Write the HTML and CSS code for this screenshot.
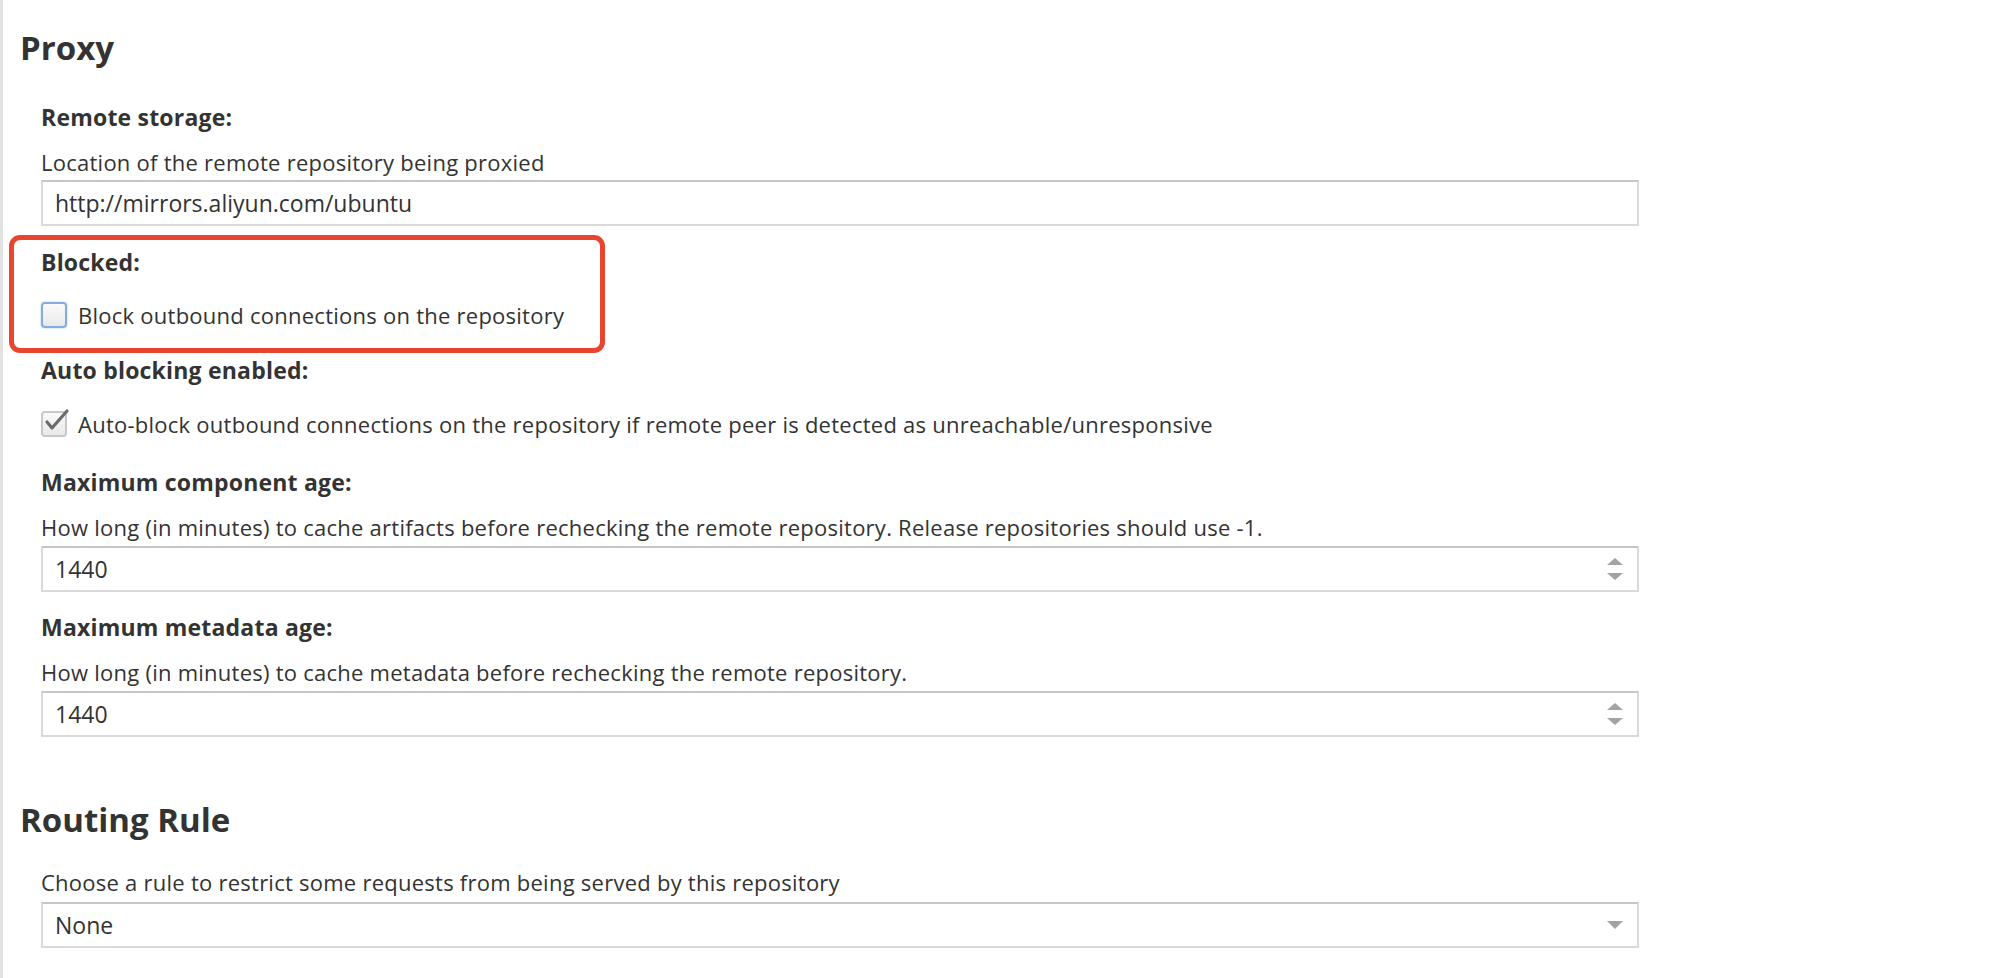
FILE: index.html
```html
<!DOCTYPE html>
<html lang="en">
<head>
    <meta charset="UTF-8">
    <title>Repository settings</title>
    <link rel="stylesheet" href="styles.css">
</head>
<body>
    <div class="page">
        <h2 class="section-title">Proxy</h2>
        <div class="fields">
            <!-- Remote storage -->
            <div class="field first">
                <div class="field-label">Remote storage:</div>
                <div class="field-help">Location of the remote repository being proxied</div>
                <div class="text-input">http://mirrors.aliyun.com/ubuntu</div>
            </div>

            <!-- Blocked (highlighted) -->
            <div class="highlight">
                <div class="field">
                    <div class="field-label">Blocked:</div>
                    <label class="check-row">
                        <span class="checkbox focused"></span>
                        <span>Block outbound connections on the repository</span>
                    </label>
                </div>
            </div>

            <!-- Auto blocking -->
            <div class="field after-highlight">
                <div class="field-label">Auto blocking enabled:</div>
                <label class="check-row">
                    <span class="checkbox checked">
                        <svg width="28" height="26" viewBox="0 0 28 26"><path d="M5 14 L10 20 L25 3" fill="none" stroke="#6b6b6b" stroke-width="3.2" stroke-linecap="round" stroke-linejoin="round"/></svg>
                    </span>
                    <span>Auto-block outbound connections on the repository if remote peer is detected as unreachable/unresponsive</span>
                </label>
            </div>

            <!-- Max component age -->
            <div class="field after-check">
                <div class="field-label">Maximum component age:</div>
                <div class="field-help">How long (in minutes) to cache artifacts before rechecking the remote repository. Release repositories should use -1.</div>
                <div class="text-input number">
                    <span>1440</span>
                    <svg class="spinner" width="18" height="24" viewBox="0 0 18 24"><path d="M9 1 L17 8 L1 8 Z M1 16 L17 16 L9 23 Z" fill="#a3a3a3"/></svg>
                </div>
            </div>

            <!-- Max metadata age -->
            <div class="field">
                <div class="field-label">Maximum metadata age:</div>
                <div class="field-help">How long (in minutes) to cache metadata before rechecking the remote repository.</div>
                <div class="text-input number">
                    <span>1440</span>
                    <svg class="spinner" width="18" height="24" viewBox="0 0 18 24"><path d="M9 1 L17 8 L1 8 Z M1 16 L17 16 L9 23 Z" fill="#a3a3a3"/></svg>
                </div>
            </div>
        </div>

        <h2 class="section-title routing">Routing Rule</h2>
        <div class="fields">
            <div class="field">
                <div class="field-help top">Choose a rule to restrict some requests from being served by this repository</div>
                <div class="text-input number">
                    <span>None</span>
                    <svg class="spinner" width="18" height="10" viewBox="0 0 18 10"><path d="M1 1 L17 1 L9 9 Z" fill="#a3a3a3"/></svg>
                </div>
            </div>
        </div>
    </div>
</body>
</html>
```

FILE: styles.css
```css
body {
    margin: 0;
    font-family: 'Open Sans', 'Liberation Sans', sans-serif;
    color: #333;
    background: #fff;
}

.page {
    min-height: 978px;
    box-sizing: border-box;
    border-left: 3px solid #e2e2e2;
    padding: 28px 0 0 17px;
}

.section-title {
    margin: 0;
    font-size: 33px;
    line-height: 40px;
    font-weight: 700;
    color: #333;
}

.section-title.routing {
    margin-top: 63px;
}

.fields {
    padding-left: 21px;
    width: 1598px;
}

.field {
    margin-top: 22px;
}

.field.first {
    margin-top: 36px;
}

.field.after-highlight {
    margin-top: 4px;
}

.field.after-check {
    margin-top: 32px;
}

.field-label {
    font-size: 23px;
    letter-spacing: 0.2px;
    line-height: 26px;
    font-weight: 700;
}

.field-help {
    margin-top: 20px;
    font-size: 22px;
    letter-spacing: 0.25px;
    line-height: 24px;
}

.field-help.top {
    margin-top: 30px;
}

.text-input {
    margin-top: 6px;
    height: 46px;
    box-sizing: border-box;
    border: 2px solid #d9d9d9;
    border-top-color: #c6c6c6;
    padding: 0 13px 0 12px;
    font-size: 23px;
    line-height: 42px;
    display: flex;
    align-items: center;
    justify-content: space-between;
}

.text-input.number {
    margin-top: 7px;
}

.fields:last-child .text-input {
    margin-top: 8px;
}

/* red annotation box round the Blocked field */
.highlight {
    margin: 9px 0 0 -32px;
    width: 596px;
    box-sizing: border-box;
    border: 5px solid #e8452f;
    border-radius: 11px;
    padding: 9px 0 20px 27px;
}

.highlight .field {
    margin-top: 0;
}

.check-row {
    display: flex;
    align-items: center;
    gap: 11px;
    margin-top: 27px;
    font-size: 22px;
    letter-spacing: 0.25px;
    line-height: 26px;
}

.after-highlight .check-row {
    margin-top: 28px;
}

.checkbox {
    position: relative;
    width: 26px;
    height: 26px;
    box-sizing: border-box;
    border-radius: 4px;
    border: 2px solid #c8c8c8;
    background: linear-gradient(#fafafa, #e9e9e9);
    flex-shrink: 0;
}

.checkbox.focused {
    border-color: #86acdc;
    box-shadow: 0 0 2px rgba(100, 150, 220, 0.6);
}

.checkbox.checked svg {
    position: absolute;
    left: -1px;
    top: -5px;
}
```
